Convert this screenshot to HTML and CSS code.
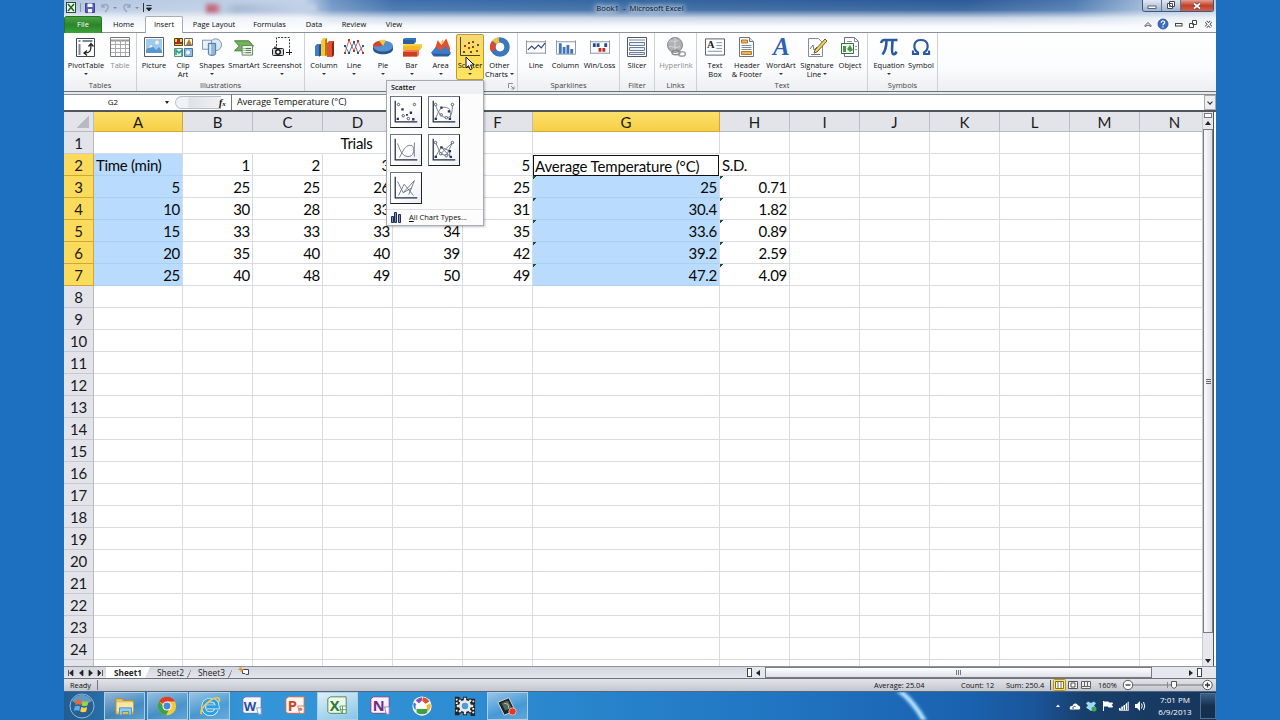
FILE: index.html
```
<!DOCTYPE html>
<html lang="en">
<head>
    <meta charset="UTF-8">
    <meta name="viewport" content="width=device-width, initial-scale=1.0">
    <title>Book1 - Microsoft Excel</title>
    <link rel="stylesheet" href="styles.css">
</head>
<body>
    <div class="window">
        <div class="chrome">
            <div class="glass-tabs"></div>
            <div class="titlebar">
                <svg class="quick" width="90" height="14" viewBox="0 0 90 14">
                    <rect x="1.5" y="2.5" width="9" height="10" fill="#f4faf2" stroke="#24522b"/>
                    <path d="M3 4l6 7M9 4l-6 7" stroke="#1e6a2c" stroke-width="1.6"/>
                    <path d="M15.5 3v9" stroke="#8496b4"/>
                    <path d="M20.5 3.5h9v9h-9z" fill="#5d62b8" stroke="#3b4197"/>
                    <path d="M22.5 3.5h5v3.5h-5zM23 9h4v3.5h-4z" fill="#f4f5ff"/>
                    <path d="M37 4v3h3M37 7c2-4 7-3 6 1c-.5 2-2 3-3 4" fill="none" stroke="#98a6bc" stroke-width="1.4"/>
                    <path d="M48 7h4l-2 2zM70 7h4l-2 2z" fill="#7d8ba5"/>
                    <path d="M65 4v3h-3M65 7c-2-4-7-3-6 1c.5 2 2 3 3 4" fill="none" stroke="#98a6bc" stroke-width="1.4"/>
                    <path d="M78.5 3v9" stroke="#333"/>
                    <path d="M81.5 5.5h5M81.5 8h5l-2.5 3z" stroke="#222" stroke-width=".9" fill="#222"/>
                </svg>
                <span class="title">Book1&nbsp; - &nbsp;Microsoft Excel</span>
                <div class="winbtns">
                    <span class="wb"><svg width="10" height="8" viewBox="0 0 10 8"><rect x="1" y="4" width="8" height="2.5" fill="#fff" stroke="#445" stroke-width=".8"/></svg></span>
                    <span class="wb"><svg width="10" height="9" viewBox="0 0 10 9"><path d="M3.5.5h5v5h-5zM1.5 2.5h5v5h-5z" fill="#fff" stroke="#445"/><rect x="3" y="4" width="2" height="2" fill="#667"/></svg></span>
                    <span class="wb close"><svg width="10" height="8" viewBox="0 0 10 8"><path d="M2 1.5l6 5M8 1.5l-6 5" stroke="#5b2a2a" stroke-width="3"/><path d="M2 1.5l6 5M8 1.5l-6 5" stroke="#fff" stroke-width="1.8"/></svg></span>
                </div>
            </div>
            <div class="tabs">
                <span class="tab file">File</span>
                <span class="tab home">Home</span>
                <span class="tab insert">Insert</span>
                <span class="tab layout">Page Layout</span>
                <span class="tab formulas">Formulas</span>
                <span class="tab">Data</span>
                <span class="tab">Review</span>
                <span class="tab">View</span>
                <svg class="help" width="70" height="14" viewBox="0 0 70 14">
                    <path d="M2 8.5l3-3l3 3v1l-3-1.5l-3 1.5z" fill="#fff" stroke="#444" stroke-width=".9"/>
                    <circle cx="20" cy="7" r="5" fill="#3b6cc4" stroke="#234b93" stroke-width=".8"/>
                    <path d="M18.3 5.7c0-2.4 3.6-2.2 3.4 0c-.1 1.2-1.7 1.1-1.7 2.5M20 9.2v1.2" stroke="#fff" stroke-width="1.2" fill="none"/>
                    <rect x="32.5" y="6.5" width="6.5" height="2.5" fill="#fff" stroke="#444"/>
                    <path d="M49.5 3.5h4v4h-4zM46.5 6.5h4v4h-4z" fill="#fff" stroke="#444"/>
                    <path d="M63 4.5l5 5.5M68 4.5l-5 5.5" stroke="#444" stroke-width="2.8"/><path d="M63 4.5l5 5.5M68 4.5l-5 5.5" stroke="#fff" stroke-width="1.2"/>
                </svg>
            </div>
        </div>

        <div class="ribbon">
            <div class="group tables">
                <div class="buttons">
                    <div class="btn w40">
                        <svg viewBox="0 0 20 20"><path d="M.5 1.500h18v18h-18z" fill="#fff" stroke="#3f4552"/><path d="M2.500 4h2M6.500 4h10M3.500 7v11" stroke="#7d8898" stroke-width="2"/><path d="M9 16c5 0 6-2 6-8M12.500 9.500l2.500-3l2.500 3M11 13.500l-3 2.500l3 2.500" fill="none" stroke="#222" stroke-width="1.3"/></svg>
                        PivotTable<i></i>
                    </div>
                    <div class="btn w28 off">
                        <svg viewBox="0 0 20 20"><path d="M.5.5h19v19H.5z" fill="#fff" stroke="#777"/><path d="M.5 3.500h19" stroke="#999" stroke-width="2"/><path d="M1 7.500h18M1 11.500h18M1 15.500h18M5.500 3v16M10.500 3v16M15.500 3v16" stroke="#aaa"/></svg>
                        Table
                    </div>
                </div>
                <div class="caption">Tables</div>
            </div>
            <div class="group illus">
                <div class="buttons">
                    <div class="btn w28">
                        <svg viewBox="0 0 20 20"><path d="M.5.5h19v19H.5z" fill="#fff" stroke="#555d6c"/><path d="M2 2h16v14H2z" fill="#9dcbf0"/><path d="M2 16v-3l5-6l5 6l3-3l3 4v2z" fill="#5a96cf"/><path d="M4 11l3-4l2 3z" fill="#e8f3fb"/><circle cx="13" cy="5.500" r="2" fill="#f7f2cf"/></svg>
                        Picture
                    </div>
                    <div class="btn w30">
                        <svg viewBox="0 0 20 20"><path d="M1.500 1.500h8v7h-8z" fill="#f2cf3c" stroke="#55411c"/><path d="M2 5h7v2H2zM4 2h3v4H4z" fill="#9b3030"/><path d="M11.500 1.500h8v7h-8z" fill="#fffbe0" stroke="#666"/><path d="M13 8l3-6l3 6z" fill="#b37b24"/><path d="M1.500 11.500h8v8h-8z" fill="#e0f0e8" stroke="#5a8f80"/><path d="M3 18v-5l3 3l3-3v6" stroke="#2c9880" fill="none" stroke-width="1.5"/><path d="M11.500 11.500h8v8h-8z" fill="#8bbbe3" stroke="#48739e"/><circle cx="15" cy="15.500" r="2" fill="#eef5fc"/></svg>
                        Clip<br>Art
                    </div>
                    <div class="btn w28">
                        <svg viewBox="0 0 22 20"><circle cx="15" cy="7.500" r="6.500" fill="#dbe7f4" stroke="#6f8fb1"/><path d="M.5 2.500h10v10H.500z" fill="#e8f0f9" stroke="#6f8fb1"/><path d="M7 6h8v11.500c0 2.300-8 2.300-8 0z" fill="#91b6db" stroke="#466f9d"/><path d="M9 7v11" stroke="#dbeafa" stroke-width="2"/></svg>
                        Shapes<i></i>
                    </div>
                    <div class="btn w36">
                        <svg viewBox="0 0 21 20"><path d="M.5 3.500h15l5 5.500l-5 5h-15l5-5z" fill="#72b35b" stroke="#427a31"/><path d="M8.500 8.500h11v10h-11z" fill="#f7fbf6" stroke="#5b8150"/><path d="M10 11.500h1M12 11.500h6M10 13.500h1M12 13.500h6M10 16h1M12 16h6" stroke="#3f6840"/></svg>
                        SmartArt
                    </div>
                    <div class="btn w40">
                        <svg viewBox="0 0 20 20"><path d="M4.500 9V.5h13V14" fill="none" stroke="#333" stroke-dasharray="2 1.300"/><path d="M14 15.500h6M17.500 13v5" stroke="#222"/><rect x=".5" y="11.500" width="11" height="7" rx="1" fill="#d0d3d8" stroke="#222"/><path d="M2 11V9.500h3V11" fill="#555"/><circle cx="6" cy="15" r="2.300" fill="#fff" stroke="#111" stroke-width="1.400"/></svg>
                        Screenshot<i></i>
                    </div>
                </div>
                <div class="caption">Illustrations</div>
            </div>
            <div class="group charts">
                <div class="buttons">
                    <div class="btn w28">
                        <svg viewBox="0 0 20 20"><path d="M1 9l2-2h4v12H1z" fill="#3f7cc3"/><path d="M5 8l2-1v11l-2 2z" fill="#234d86"/><path d="M7 4l2-3h4v18H7z" fill="#f5c63a"/><path d="M11 3l2-2v17l-2 1z" fill="#b07f12"/><path d="M13 6l2-2h5v14l-2 2h-5z" fill="#dd5331"/><path d="M18 6l2-2v14l-2 2z" fill="#8e2415"/></svg>
                        Column<i></i>
                    </div>
                    <div class="btn w32">
                        <svg viewBox="0 0 20 20"><path d="M1 16l4-13l5 11l4-10l5 12" fill="none" stroke="#c9655d"/><path d="M1 9l4 7l5-11l4 11l5-7" fill="none" stroke="#56759f"/><path d="M0 15h2v2H0zM4 2h2v2H4zM9 13h2v2H9zM13 3h2v2h-2zM18 15h2v2h-2z" fill="#c2302a"/><path d="M0 8h2v2H0zM4 15h2v2H4zM9 4h2v2H9zM13 15h2v2h-2zM18 8h2v2h-2z" fill="#26508e"/></svg>
                        Line<i></i>
                    </div>
                    <div class="btn w26">
                        <svg viewBox="0 0 20 20"><path d="M0 9v3c0 7 20 7 20 0V9z" fill="#27578f"/><ellipse cx="10" cy="9" rx="10" ry="5.500" fill="#5590d0"/><path d="M10 9L0 9.500C0 6 3 4.500 7 4z" fill="#d7422b"/><path d="M10 9L6 3.500C8 2.600 11 2.500 13 3z" fill="#f3c944"/></svg>
                        Pie<i></i>
                    </div>
                    <div class="btn w31">
                        <svg viewBox="0 0 20 20"><path d="M1 2l2-1h11v4l-2 2H1z" fill="#3674bf"/><path d="M1 3h11v4H1z" fill="#2c5d9f"/><path d="M1 8l2-1h17v4l-2 2H1z" fill="#f6d04b"/><path d="M1 9h17v4H1z" fill="#f0b925"/><path d="M1 14l2-1h14v5l-2 2H1z" fill="#ef7857"/><path d="M1 15h14v4H1z" fill="#cd3d22"/></svg>
                        Bar<i></i>
                    </div>
                    <div class="btn w27">
                        <svg viewBox="0 0 21 20"><path d="M4 12l3-9l4 5l5-7l4 10v7H4z" fill="#e0512f"/><path d="M10 7l2-5l2 3z" fill="#f3bb31"/><path d="M0 16l5-6l5 4l5-5l6 7l-3 3H2z" fill="#3b7cc5"/><path d="M1 17h20l-3 3H3z" fill="#2a5fa3"/></svg>
                        Area<i></i>
                    </div>
                    <div class="btn scatter">
                        <svg viewBox="0 0 20 20"><path d="M.5 0v18.500H20" fill="none" stroke="#4c4628"/><path d="M4 8h2v2H4zM8 10h2v2H8zM12 4h2v2h-2zM16 13h2v2h-2z" fill="#b4362d"/><path d="M3 14h2v2H3zM8 5h2v2H8zM12 9h2v2h-2zM17 7h2v2h-2zM10 14h2v2h-2z" fill="#7b4b20"/></svg>
                        Scatter<i></i>
                        <svg class="cursor" viewBox="0 0 10 15"><path d="M1 1v11l2.500-2.300l1.700 4l2-.9l-1.700-3.800H9z" fill="#fff" stroke="#111"/></svg>
                    </div>
                    <div class="btn other">
                        <svg viewBox="0 0 20 20"><circle cx="10" cy="10" r="7" fill="none" stroke="#3a77bd" stroke-width="5.5"/><path d="M3.500 13.500A7 7 0 0 1 4 6" fill="none" stroke="#dc4b2c" stroke-width="5.5"/><path d="M4.500 5.500A7 7 0 0 1 9 3" fill="none" stroke="#f2c03a" stroke-width="5.5"/><circle cx="10" cy="10" r="4.200" fill="#fdfdfe"/></svg>
                        Other<br>Charts <i class="inl"></i>
                    </div>
                </div>
                <div class="caption"><svg class="launch" width="7" height="7" viewBox="0 0 7 7"><path d="M.5 5V.5H5M3 3l3 3M6 3.500V6H3.500" stroke="#8a8f98" fill="none"/></svg></div>
            </div>
            <div class="group spark">
                <div class="buttons">
                    <div class="btn w24">
                        <svg viewBox="0 0 21 20"><path d="M.5 3v14M20.500 3v14M0 4.500h21M0 16.500h21" stroke="#8c939e"/><path d="M2 13l4-4l3 3l4-4l3 3l4-5" fill="none" stroke="#2e4a7c" stroke-width="1.2"/></svg>
                        Line
                    </div>
                    <div class="btn w35">
                        <svg viewBox="0 0 21 20"><path d="M.5 3v14M20.500 3v14M0 4.500h21M0 17.500h21" stroke="#8c939e"/><path d="M3 6h3v11H3zM7 10h3v7H7zM11 8h3v9h-3zM15 12h3v5h-3z" fill="#4173ba"/></svg>
                        Column
                    </div>
                    <div class="btn w33">
                        <svg viewBox="0 0 21 20"><path d="M.5 3v14M20.500 3v14M0 4.500h21M0 16.500h21" stroke="#8c939e"/><path d="M3 6h3v4H3zM7 6h3v4H7zM15 6h3v4h-3z" fill="#244d8e"/><path d="M9 11h3v4H9zM13 11h3v4h-3z" fill="#bd2f25"/></svg>
                        Win/Loss
                    </div>
                </div>
                <div class="caption">Sparklines</div>
            </div>
            <div class="group filter">
                <div class="buttons">
                    <div class="btn w28">
                        <svg viewBox="0 0 20 20"><path d="M.5.5h19v19H.5z" fill="#fff" stroke="#4f5867"/><path d="M2 3h16" stroke="#7c8797"/><path d="M2.500 5.500h15v3h-15zM2.500 10.500h15v3h-15zM2.500 15.500h15v2h-15z" fill="#e8eefa" stroke="#6c7d9b"/></svg>
                        Slicer
                    </div>
                </div>
                <div class="caption">Filter</div>
            </div>
            <div class="group links">
                <div class="buttons">
                    <div class="btn w40 off">
                        <svg viewBox="0 0 20 20"><circle cx="9" cy="8" r="7.500" fill="#aeb1b5" stroke="#85888d"/><path d="M3 5c3-3 6 2 9-2M3 10c4-2 6 3 11-1M9 1v14" fill="none" stroke="#d7d9dc"/><ellipse cx="10" cy="15.500" rx="4" ry="2.300" fill="none" stroke="#85888d" stroke-width="1.5"/><ellipse cx="16" cy="17" rx="3.500" ry="2.200" fill="none" stroke="#9b9ea3" stroke-width="1.5"/></svg>
                        Hyperlink
                    </div>
                </div>
                <div class="caption">Links</div>
            </div>
            <div class="group textgroup">
                <div class="buttons">
                    <div class="btn w28">
                        <svg viewBox="0 0 21 20"><path d="M.5 1.500h20v17H.5z" fill="#fff" stroke="#4f5867"/><text x="2" y="11.500" class="glyph">A</text><path d="M12 5.500h6M12 8.500h6M12 11.500h6M3 14.500h15" stroke="#8190a8"/></svg>
                        Text<br>Box
                    </div>
                    <div class="btn w36">
                        <svg viewBox="0 0 20 20"><path d="M2.500.5h10l4 4v15h-14z" fill="#fff" stroke="#6b7587"/><path d="M12.500.5v4h4" fill="#dde4ee" stroke="#6b7587"/><path d="M4.500 3h6v3h-6zM4.500 14.500h10v3h-10z" fill="#f2b05a" stroke="#b7762a"/><path d="M4.500 8.500h10M4.500 10.500h10M4.500 12.500h10" stroke="#7c8aa3"/></svg>
                        Header<br>&amp; Footer
                    </div>
                    <div class="btn w32">
                        <svg class="wordart" viewBox="0 0 20 20"><text x="2" y="18" class="glyph art">A</text></svg>
                        WordArt<i></i>
                    </div>
                    <div class="btn w40">
                        <svg viewBox="0 0 20 20"><path d="M1.500 1.500h10l4 4v14h-14z" fill="#fff" stroke="#858d99"/><path d="M3 12l3-4l1 5l3-3M4 17.500h9" fill="none" stroke="#6c7580"/><path d="M18 2l2 2L10 15l-3 1l1-3z" fill="#efcf57" stroke="#604e26" stroke-width=".9"/></svg>
                        Signature<br>Line <i class="inl"></i>
                    </div>
                    <div class="btn w26">
                        <svg viewBox="0 0 20 20"><path d="M4.500.5h10l4 4v15h-14z" fill="#fff" stroke="#697484"/><path d="M14.500.5v4h4M7 4.500h5M15 9.500h2M15 12.500h2" fill="none" stroke="#8794a5"/><path d="M1.500 6.500h12v10h-12z" fill="#f1f8ee" stroke="#3d6e43"/><path d="M3 15V9h3v6M7 12l3-4l3 5l-3 2z" fill="#4f9352"/></svg>
                        Object
                    </div>
                </div>
                <div class="caption">Text</div>
            </div>
            <div class="group symbols">
                <div class="buttons">
                    <div class="btn w36">
                        <svg viewBox="0 0 20 20"><path d="M2 6C3 2.500 4.500 3 6 3h12.500" fill="none" stroke="#2b5aa5" stroke-width="2.600"/><path d="M7.500 3c0 6-1 11-4 14.500M13.500 3c0 6-1.500 13 .5 14c1.500.5 2.800-.5 3.500-2.500" fill="none" stroke="#2b5aa5" stroke-width="2.600"/></svg>
                        Equation<i></i>
                    </div>
                    <div class="btn w28">
                        <svg viewBox="0 0 20 20"><path d="M2 13.500V17h5v-1.500C1.500 12 2 3 10 3s8.500 9 3 12.500V17h5v-3.500" fill="none" stroke="#2b5aa5" stroke-width="2.200"/></svg>
                        Symbol
                    </div>
                </div>
                <div class="caption">Symbols</div>
            </div>
        </div>

        <div class="formula-bar">
            <span class="name-box">G2</span>
            <i class="arrow"></i>
            <span class="fx-pill"></span>
            <span class="fx">f<small>x</small></span>
            <span class="formula">Average Temperature (°C)</span>
            <span class="expand"><i class="chev"></i></span>
        </div>

        <div class="sheet-area">
            <div class="grid" id="grid"></div>
            <div class="vscroll">
                <div class="split"></div>
                <div class="up"></div>
                <div class="thumb"><b></b><b></b><b></b></div>
                <div class="down"></div>
            </div>
        </div>

        <div class="sheet-tabs">
            <svg width="42" height="12" viewBox="0 0 42 12"><path d="M4.500 3v6M9 3v6L5.500 6zM19 3v6l-3.500-3zM25 3v6l3.500-3zM34 3v6l3-3zM38.500 3v6" fill="#222" stroke="#222" stroke-width=".7"/></svg>
            <span class="stab on">Sheet1</span>
            <span class="stab">Sheet2</span>
            <span class="stab">Sheet3</span>
            <span class="stab new"><svg width="12" height="9" viewBox="0 0 12 9"><path d="M4.500 2.500h6v5H8l-1-1H4.500z" fill="#fff" stroke="#445"/><path d="M3 0v5M.5 2.500h5M1.200.8l3.600 3.400" stroke="#e08a2a"/></svg></span>
            <div class="hscroll">
                <span class="hsplit"></span>
                <span class="left"></span>
                <span class="hthumb"><b></b><b></b><b></b></span>
                <span class="right"></span>
                <span class="hsplit"></span>
            </div>
        </div>

        <div class="status">
            <span class="ready">Ready</span>
            <span class="average">Average: 25.04</span>
            <span class="count">Count: 12</span>
            <span class="sum">Sum: 250.4</span>
            <svg class="views" width="42" height="12" viewBox="0 0 42 12">
                <path d="M.5 1v10" stroke="#555"/>
                <rect x="3.500" y=".5" width="12" height="11" rx="1" fill="#fbe26d" stroke="#b69524"/>
                <path d="M5.500 2.500h8v7h-8zM8 2.500v7M11 2.500v7" fill="#fff" stroke="#806d2f"/>
                <path d="M18.500 2.500h9v7h-9z" fill="#eee" stroke="#555"/><path d="M21 4h4v4h-4z" fill="#fff" stroke="#555"/>
                <path d="M31.500 2.500h9v7h-9zM34.500 2.500v5M37.500 2.500v5M32 7.500h8" fill="#eee" stroke="#666"/>
            </svg>
            <span class="zoom">160%</span>
            <svg width="92" height="12" viewBox="0 0 92 12">
                <path d="M11 6h70" stroke="#777"/><path d="M45.500 3v6" stroke="#888"/>
                <circle cx="6" cy="6" r="4.700" fill="#fff" stroke="#555"/><path d="M3.500 6h5" stroke="#333" stroke-width="1.3"/>
                <path d="M49.500 2.500h5v5L52 9.500l-2.500-2z" fill="#fff" stroke="#555"/>
                <circle cx="85.500" cy="6" r="4.700" fill="#fff" stroke="#555"/><path d="M83 6h5M85.500 3.500v5" stroke="#333" stroke-width="1.3"/>
            </svg>
        </div>

        <div class="menu">
            <div class="menu-title">Scatter</div>
            <div class="choices">
                <svg viewBox="0 0 32 32"><path d="M4.500 4v22.500H28" class="axis"/><g class="ring"><circle cx="8" cy="8" r="1.300"/><circle cx="25" cy="8" r="1.300"/><circle cx="13" cy="20" r="1.300"/><circle cx="18.500" cy="23" r="1.300"/></g><path d="M11 12h2.500v2.500H11zM20 15.500h2.500V18H20zM16 18h2v2h-2zM6 22h2.500v2.500H6zM22.500 22.500H25V25h-2.500z"/></svg>
                <svg viewBox="0 0 32 32"><path d="M4.500 4v22.500H28" class="axis"/><path d="M7 8c2 8 6 14 12 14c5 0 6-6 6-14M7 23c3-7 5-13 10-12s6 1 6 12" class="ln"/><g class="ring"><circle cx="7" cy="8" r="1.300"/><circle cx="25" cy="8" r="1.300"/><circle cx="13" cy="19" r="1.300"/><circle cx="18.500" cy="22" r="1.300"/></g><path d="M12 10h2.500v2.500H12zM20 14h2.500v2.500H20zM6 22h2.500v2.500H6zM21 22h2.500v2.500H21z"/></svg>
                <svg viewBox="0 0 32 32"><path d="M4.500 4v22.500H28" class="axis"/><path d="M7 9c2 6 5 14 11 14c6 0 7-5 7-15M9 24c4-7 6-13 11-13c4 0 5 3 5 12" class="ln"/></svg>
                <svg viewBox="0 0 32 32"><path d="M4.500 4v22.500H28" class="axis"/><path d="M7 8l5.500 12l6 2l6.500-14M7 23l6-10l9 4v6" class="ln"/><path d="M13 13l9.500 10M12.500 20L25 8" class="ln"/><g class="ring"><circle cx="7" cy="8" r="1.300"/><circle cx="25" cy="8" r="1.300"/><circle cx="12.500" cy="20" r="1.300"/><circle cx="18.500" cy="22" r="1.300"/></g><path d="M12 12h2.500v2.500H12zM21 16h2.500v2.500H21zM6 22h2.500v2.500H6zM22 22h2.500v2.500H22z"/></svg>
                <svg viewBox="0 0 32 32"><path d="M4.500 4v22.500H28" class="axis"/><path d="M7 9l6 12l12-13l-6 15M8 24l6-12l10 12M13 21l9-5" class="ln"/></svg>
            </div>
            <div class="all-types">
                <svg width="12" height="12" viewBox="0 0 12 12"><path d="M1.500 5.500h2v6h-2zM4.500 1.500h2v10h-2zM8.500 3.500h2v8h-2z" fill="#8296c4" stroke="#1e2b55"/></svg>
                <span><u>A</u>ll Chart Types...</span>
            </div>
        </div>
    </div>

    <div class="taskbar">
        <svg class="streak" width="60" height="28" viewBox="0 0 60 28"><path d="M17 -3Q34 9 46 32" fill="none" stroke="#5aa9e8" stroke-width="8" opacity=".5"/><path d="M17 -3Q34 9 46 32" fill="none" stroke="#b4defa" stroke-width="4"/></svg>
        <div class="start"><svg width="28" height="28" viewBox="0 0 28 28"><circle cx="14" cy="14" r="12" fill="#2a5f92" stroke="#8fb9d9"/><path d="M4 9C8 1 20 1 24 9c-5 4-15 4-20 0z" fill="#7fb0d6" opacity=".7"/><path d="M8 9c2-1.500 4-1.500 5.500-.5L12.500 13c-1.500-1-3.500-1-5.500 0z" fill="#f0672c"/><path d="M14.500 9c2 1 4 1 6 0l-1 4.500c-2 1-4 1-6 0z" fill="#9fd04b"/><path d="M6.800 14.500c2-1 3.800-1 5.400 0l-1 4.500c-1.600-1-3.600-1-5.400 0z" fill="#55b1ea"/><path d="M13.200 15c2 1 4 1 6 0l-1 4.500c-2 1-4 1-6 0z" fill="#fad14a"/></svg></div>
        <div class="task open"><svg viewBox="0 0 24 24"><path d="M2 4h7l1 2h11v15H2z" fill="#e5c264" stroke="#b08b34"/><path d="M3 8h18v10H3z" fill="#f8e6a6"/><path d="M6 14h13v8h-3v-4H9v4H6z" fill="#8ccbee" stroke="#4b8fbd"/></svg></div>
        <div class="task open"><svg viewBox="0 0 24 24"><circle cx="12" cy="12" r="10" fill="#f3cb3a"/><path d="M12 12L3.300 7A10 10 0 0 1 20.700 7H12z" fill="#dc3d2c"/><path d="M3.300 7A10 10 0 0 0 11 22l4-8l-5-.5z" fill="#3ba14b"/><circle cx="12" cy="12" r="5" fill="#fff"/><circle cx="12" cy="12" r="3.800" fill="#4a86d8"/></svg></div>
        <div class="task open"><svg viewBox="0 0 24 24"><path d="M19 16c-1.500 3-3.500 4.500-6.500 4.500c-4.500 0-7.500-3-7.500-7.500s3-7.500 7.500-7.500S20 8.500 20 13H8" fill="none" stroke="#e6f6ff" stroke-width="5"/><path d="M19 16c-1.500 3-3.500 4.500-6.500 4.500c-4.500 0-7.500-3-7.500-7.500s3-7.500 7.500-7.500S20 8.500 20 13H8" fill="none" stroke="#2b9fe3" stroke-width="3.400"/><path d="M3 21C-1 17 12 3 20 3c3 0 3 2 1 5" fill="none" stroke="#f4ca43" stroke-width="1.800"/></svg></div>
        <div class="task"><svg viewBox="0 0 24 24"><path d="M2 4l3-2h17v18H4l-2-2z" fill="#f5f8fd" stroke="#5472b8"/><text x="3" y="17" class="letter word">W</text><path d="M17 14h5v7h-3z" fill="#fff" stroke="#7f98cc"/></svg></div>
        <div class="task"><svg viewBox="0 0 24 24"><path d="M2 4l3-2h17v18H4l-2-2z" fill="#fdf4f0" stroke="#c56546"/><text x="4" y="17" class="letter ppt">P</text><path d="M15 12h7v8h-5z" fill="#fff" stroke="#d17658"/><circle cx="18" cy="15.500" r="2" fill="#db7c59"/></svg></div>
        <div class="task open light"><svg viewBox="0 0 24 24"><path d="M2 4l3-2h17v18H4l-2-2z" fill="#eff8ea" stroke="#47804b"/><text x="4" y="17" class="letter xls">X</text><path d="M15 12h7v8h-5zM15 16h7M18 12v8" fill="#fff" stroke="#5c9b60"/></svg></div>
        <div class="task"><svg viewBox="0 0 24 24"><path d="M2 4l3-2h17v18H4l-2-2z" fill="#f8f0fa" stroke="#78408b"/><text x="4" y="17" class="letter one">N</text><path d="M17 13h5v8h-3z" fill="#fff" stroke="#a273b1"/></svg></div>
        <div class="task"><svg viewBox="0 0 24 24"><circle cx="12" cy="12" r="10.500" fill="#fff"/><path d="M12 12L5 6A9.500 9.500 0 0 1 12 2.500z" fill="#8d52a8"/><path d="M13 2.500A9.500 9.500 0 0 1 20 7l-5 3l-3-3z" fill="#e5502e"/><path d="M21 9a9.500 9.500 0 0 1-2 9l-3-6z" fill="#f0b52e"/><path d="M18 19a9.500 9.500 0 0 1-12 0v-4h12z" fill="#459c47"/><path d="M3 8a9.500 9.500 0 0 0 2 9v-6l1-1z" fill="#3f7ac6"/><path d="M7 11l5-5l5 5v4H7z" fill="#fff"/></svg></div>
        <div class="task"><svg viewBox="0 0 24 24"><path d="M1 2h5v20H1zM18 4h5v19h-5z" fill="#222"/><path d="M2 4h2v2H2zM2 8h2v2H2zM2 12h2v2H2zM2 16h2v2H2zM20 6h2v2h-2zM20 10h2v2h-2zM20 14h2v2h-2zM20 18h2v2h-2z" fill="#fff"/><path d="M12 2v4M12 18v4M2 12h4M18 12h4M5 5l3 3M16 16l3 3M5 19l3-3M16 8l3-3" stroke="#222" stroke-width="4.500"/><circle cx="12" cy="12" r="5.500" fill="none" stroke="#222" stroke-width="5.500"/><path d="M12 3v4M12 17v4M3 12h4M17 12h4M5.600 5.600l3 3M15.500 15.500l3 3M5.600 18.500l3-3M15.500 8.500l3-3" stroke="#e6e9eb" stroke-width="2.500"/><circle cx="12" cy="12" r="5" fill="#4c9cd6" stroke="#e6e9eb" stroke-width="3"/></svg></div>
        <div class="task open"><svg viewBox="0 0 24 24"><path d="M2 8l12-5l7 14l-12 5z" fill="#1e2421" stroke="#dde"/><path d="M6 9l7-3l4 8l-7 3z" fill="#51665a"/><path d="M9 9l4 1l1 5" stroke="#b9c6b1" fill="none"/><circle cx="18" cy="18" r="4" fill="#dc3a2b" stroke="#f5b4a5"/></svg></div>
        <div class="tray">
            <svg width="94" height="16" viewBox="0 0 94 16" fill="#fff">
                <path d="M1 9l2-2.500L5 9z"/>
                <path d="M15 11.500c-1-3 1-4 2.500-3.500c.5-3 4-3.500 5.500-.5c2.500 0 3 3.500 1 4z"/><path d="M18 11c-.5-2 1-3 2.500-2.500" stroke="#1d4673" fill="none"/>
                <path d="M33 3.500l3 1.500l3-1.500l2 2l-2 2l2 2l-5 3.500l-5-3.500l2-2l-2-2z" fill="#9fdaf5"/><circle cx="39" cy="11" r="2.500" fill="#43a652"/>
                <path d="M48.500 3v10M49 4h4.500v1h4l-1 2l1 2h-4V8H49z" stroke="#fff"/>
                <path d="M64 10h1.500v2H64zM66.300 8.500h1.500V12h-1.500zM68.600 7h1.500v5h-1.500zM70.900 5.500h1.500V12h-1.500z"/><path d="M64.500 12.500h9V4z" fill="none" stroke="#fff" stroke-width=".7"/>
                <path d="M80 6h2l3-3v10l-3-3h-2z"/><path d="M86.500 5.500q1.500 2.500 0 5M88.500 4q2.500 4 0 8" fill="none" stroke="#fff"/>
            </svg>
            <div class="clock">7:01 PM<br>6/9/2013</div>
            <div class="peek"></div>
        </div>
    </div>

    <script>
        const cols = ['A', 'B', 'C', 'D', 'E', 'F', 'G', 'H', 'I', 'J', 'K', 'L', 'M', 'N'];
        const data = {
            2: ['Time (min)', '1', '2', '3', '', '5', 'Average Temperature (°C)', 'S.D.'],
            3: ['5', '25', '25', '26', '', '25', '25', '0.71'],
            4: ['10', '30', '28', '33', '', '31', '30.4', '1.82'],
            5: ['15', '33', '33', '33', '34', '35', '33.6', '0.89'],
            6: ['20', '35', '40', '40', '39', '42', '39.2', '2.59'],
            7: ['25', '40', '48', '49', '50', '49', '47.2', '4.09']
        };
        const grid = document.getElementById('grid');

        function addCell(text, cls) {
            const el = document.createElement('div');
            el.className = cls;
            el.textContent = text;
            grid.appendChild(el);
        }

        addCell('', 'head corner');
        cols.forEach((c) => addCell(c, 'head' + (c === 'A' || c === 'G' ? ' gold' : '')));

        for (let r = 1; r <= 25; r++) {
            addCell(r, 'head row' + (r >= 2 && r <= 7 ? ' gold' : ''));
            cols.forEach((c, i) => {
                // B1:F1 is one merged cell
                if (r === 1 && i > 1 && i < 6) return;
                if (r === 1 && i === 1) return addCell('Trials', 'cell merged');
                const inData = r >= 2 && r <= 7;
                let cls = 'cell';
                if (inData && c === 'A') cls += ' sel';
                if (inData && c === 'G') cls += r === 2 ? ' active' : ' sel';
                if (r === 2 && (c === 'A' || c === 'G' || c === 'H')) cls += ' txt';
                if (r > 2 && inData && (c === 'G' || c === 'H')) cls += ' flag';
                addCell(data[r] && data[r][i] ? data[r][i] : '', cls);
            });
        }
    </script>
</body>
</html>
```
FILE: styles.css
```
* {
    box-sizing: border-box;
}
body {
    margin: 0;
    width: 1280px;
    height: 720px;
    overflow: hidden;
    background-color: #1c70bf;
    font-family: "Open Sans", "Noto Sans", sans-serif;
    font-size: 7.5px;
    color: #0c0c0c;
    padding: 0 64px;
}
.window {
    position: relative;
    width: 1152px;
    height: 692px;
    background-color: #fff;
}

/* title bar and ribbon tabs */
.chrome {
    position: relative;
    height: 33px;
    background: linear-gradient(to bottom, rgba(255,255,255,0) 0, rgba(255,255,255,0.1) 10px, rgba(255,255,255,0.75) 18px, #f8fafd 26px, #fff 33px),
        linear-gradient(to right, #b4c7e0 0, #c3d2e8 240px, #7096c4 268px, #3f6fab 330px, #34649f 600px, #2c5a97 900px, #4d79b0 1010px, #9db8d8 1080px, #b9cde4 1152px);
    border-bottom: 1px solid #8d9199;
}
.glass-tabs {
    position: absolute;
    left: 142px;
    top: 4px;
    width: 110px;
    height: 9px;
    background: linear-gradient(to right, #c3687e 0, #c3687e 9px, #c0cee3 16px, #a9bad4 30px, #c0cfe5 90px);
    filter: blur(2px);
}
.titlebar {
    position: relative;
    height: 16px;
    display: flex;
    align-items: flex-start;
}
.quick {
    margin-left: 1px;
    width: 90px;
}
.title {
    flex: 1;
    text-align: center;
    padding-right: 17px;
    font-size: 7.7px;
    line-height: 16px;
    color: #050d1c;
    text-shadow: 0 0 4px #dbe7f7, 0 0 5px #dbe7f7, 0 0 6px #dbe7f7, 0 0 8px #dbe7f7;
}
.winbtns {
    display: flex;
    margin-right: 2px;
    height: 12px;
    border: 1px solid #40587c;
    border-top: 0;
    border-radius: 0 0 3px 3px;
    overflow: hidden;
}
.wb {
    width: 19px;
    display: flex;
    align-items: center;
    justify-content: center;
    background: linear-gradient(#dfe8f3, #9fb4d0);
    border-right: 1px solid #5d7496;
}
.wb.close {
    width: 32px;
    border: 0;
    background: linear-gradient(#e3a08f, #c2402c 50%, #d0604a);
}
.tabs {
    position: relative;
    display: flex;
    height: 17px;
}
.tab {
    width: 40px;
    text-align: center;
    line-height: 17px;
    font-size: 7.5px;
}
.tab.file {
    width: 38px;
    color: #fff;
    background: linear-gradient(#4aa444, #2b8429 50%, #3ca33a);
    border: 1px solid #27722a;
    border-bottom: 0;
    border-radius: 3px 3px 0 0;
    line-height: 15px;
}
.tab.home { width: 43px; }
.tab.insert {
    width: 38px;
    height: 17px;
    background-color: #fff;
    border: 1px solid #a7adb7;
    border-bottom: 0;
    border-radius: 2px 2px 0 0;
    line-height: 15px;
}
.tab.layout { width: 62px; }
.tab.formulas { width: 49px; }
.help {
    margin-left: auto;
    margin-right: 3px;
    margin-top: 1px;
}

/* ribbon */
.ribbon {
    display: flex;
    height: 59px;
    background: linear-gradient(#fff, #fbfcfd 60%, #eceef1);
    border-bottom: 1px solid #6c7078;
}
.group {
    display: flex;
    flex-direction: column;
    border-right: 1px solid #cdd1d7;
}
.buttons {
    display: flex;
    height: 48px;
}
.caption {
    text-align: center;
    line-height: 9px;
    height: 10px;
    color: #444;
    position: relative;
}
.tables { width: 73px; }
.tables .buttons { padding-left: 2px; }
.illus { width: 168px; }
.illus .buttons { padding-left: 3px; }
.charts { width: 213px; }
.charts .buttons { padding-left: 5px; }
.spark { width: 102px; }
.spark .buttons { padding-left: 6px; }
.filter { width: 35px; }
.filter .buttons { padding-left: 3px; }
.links { width: 42px; }
.links .buttons { padding-left: 1px; }
.textgroup { width: 171px; }
.textgroup .buttons { padding-left: 4px; }
.symbols { width: 70px; }
.symbols .buttons { padding-left: 3px; }
.btn {
    position: relative;
    flex: none;
    padding-top: 4px;
    text-align: center;
    line-height: 9px;
    white-space: nowrap;
}
.btn > svg {
    display: block;
    width: 20px;
    height: 20px;
    margin: 0 auto 4px;
}
.btn > .wordart { overflow: visible; }
.btn i {
    display: block;
    width: 0;
    margin: 3px auto 0;
    border: 2px solid transparent;
    border-top-color: #333;
    border-bottom: 0;
}
.btn i.inl {
    display: inline-block;
    margin: 0 0 2px;
}
.btn.off { color: #8d8d8d; }
.w24 { width: 24px; }
.w26 { width: 26px; }
.w27 { width: 27px; }
.w28 { width: 28px; }
.w30 { width: 30px; }
.w31 { width: 31px; }
.w32 { width: 32px; }
.w33 { width: 33px; }
.w35 { width: 35px; }
.w36 { width: 36px; }
.w40 { width: 40px; }
.scatter {
    width: 28px;
    height: 46px;
    margin: 1px 0 0 2px;
    padding-top: 2px;
    background: linear-gradient(#f6d976, #fbdd55 50%, #fde565);
    border: 1px solid #c19a38;
    border-radius: 2px;
}
.other { width: 31px; }
.btn > .cursor {
    position: absolute;
    left: 8px;
    top: 21px;
    width: 10px;
    height: 15px;
    margin: 0;
}
.launch {
    position: absolute;
    right: 2px;
    top: 2px;
}
.glyph {
    font: bold 11px "Liberation Serif", serif;
    fill: #222;
}
.glyph.art {
    font: italic bold 25px "Liberation Serif", serif;
    fill: #2c62b4;
}

/* formula bar */
.formula-bar {
    display: flex;
    align-items: center;
    height: 20px;
    border-top: 2px solid #e8eaee;
    border-bottom: 2px solid #53565c;
    box-shadow: inset 0 1px 0 #888c94;
    font-size: 9.1px;
}
.name-box {
    width: 98px;
    text-align: center;
    font-size: 8px;
    line-height: 14px;
}
.arrow {
    border: 2.5px solid transparent;
    border-top: 3px solid #222;
    border-bottom: 0;
    margin-left: 3px;
}
.fx-pill {
    width: 46px;
    height: 13px;
    margin-left: 6px;
    border: 1px solid #b9bdc5;
    border-right: 0;
    border-radius: 7px 0 0 7px;
    background: linear-gradient(to right, #f1f2f5 25%, #dfe2e7 30%, #f0f1f4);
}
.fx {
    font: italic bold 10px "Liberation Serif", serif;
    margin-left: -2px;
    width: 12px;
}
.fx small { font-size: 7px; }
.formula {
    flex: 1;
    height: 16px;
    line-height: 16px;
    border-left: 1px solid #777;
    padding-left: 5px;
}
.expand {
    width: 12px;
    height: 15px;
    border: 1px solid #a5a9b1;
    background-color: #eceef2;
    display: flex;
    align-items: center;
    justify-content: center;
}
.chev {
    width: 4px;
    height: 4px;
    border: solid #222;
    border-width: 0 1.5px 1.5px 0;
    transform: rotate(45deg);
}

/* worksheet */
.sheet-area {
    display: flex;
    height: 554px;
    overflow: hidden;
}
.grid {
    display: grid;
    grid-template-columns: 30px 89px repeat(5, 70px) 187px repeat(7, 70px);
    grid-template-rows: 20px repeat(25, 22px);
    width: 1138px;
    flex: none;
    overflow: hidden;
    height: 554px;
    font-family: Lato, "Open Sans", sans-serif;
    font-size: 15px;
    color: #080808;
}
.head {
    background-color: #e2e4ea;
    border-right: 1px solid #b9bdc6;
    border-bottom: 1px solid #b5b9c2;
    text-align: center;
    line-height: 20px;
    color: #1a1a1a;
}
.head.row {
    line-height: 22px;
    letter-spacing: -0.3px;
    border-right: 1px solid #b5b9c2;
    border-bottom: 1px solid #c5c9d1;
}
.head.gold {
    background: linear-gradient(#fbe06c, #f7cf45);
    border-color: #d2a73a;
}
.head.row.gold { background: #fbdb5c; }
.corner {
    background: linear-gradient(135deg, #e2e4ea 50%, #b6bac3 50%) no-repeat 12px 3px / 13px 13px #e2e4ea;
}
.cell {
    border-right: 1px solid #d8dbe1;
    border-bottom: 1px solid #d8dbe1;
    text-align: right;
    padding-right: 2px;
    line-height: 23px;
    letter-spacing: -0.3px;
    white-space: nowrap;
    position: relative;
}
.merged {
    grid-column: span 5;
    text-align: center;
}
.txt {
    text-align: left;
    padding-left: 2px;
}
.sel {
    background-color: #b9dbfd;
    border-bottom-color: #add0f0;
}
.active {
    border: 1px solid #111;
    margin: 1px 1px 0 0;
    padding-left: 1px;
    line-height: 20px;
    letter-spacing: -0.15px;
}
.flag {
    background-image: linear-gradient(135deg, #1d5134 50%, transparent 50%);
    background-size: 4px 4px;
    background-repeat: no-repeat;
}
.vscroll {
    display: flex;
    flex-direction: column;
    width: 12px;
    background-color: #e6e8ed;
    border-left: 1px solid #c6c9d0;
    border-right: 1px solid #555;
}
.split {
    height: 5px;
    margin: 1px 1px 3px;
    border: 1px solid #777;
    background: #fff;
}
.up {
    margin: 0 auto;
    border: 3.5px solid transparent;
    border-bottom: 4px solid #222;
    border-top: 0;
}
.thumb {
    margin: 4px 0 0;
    height: 504px;
    border: 1px solid #777b84;
    background: linear-gradient(to right, #fbfbfd, #dcdfe6);
    display: flex;
    flex-direction: column;
    align-items: center;
    justify-content: center;
    gap: 1px;
}
.thumb b {
    width: 5px;
    height: 1px;
    background: #666;
}
.down {
    margin: 26px auto 0;
    border: 3.5px solid transparent;
    border-top: 4px solid #222;
    border-bottom: 0;
}

/* sheet tabs and status bar */
.sheet-tabs {
    display: flex;
    align-items: center;
    height: 12px;
    background: linear-gradient(#d3d6de, #e4e6ec);
    border-top: 1px solid #8f939b;
    font-size: 8.4px;
}
.stab {
    width: 41px;
    text-align: center;
    line-height: 11px;
    color: #222;
    background: linear-gradient(115deg, transparent 38px, #999 38px, #999 39px, transparent 39px);
}
.stab.on {
    width: 44px;
    background: #fff;
    font-weight: bold;
    font-size: 8.2px;
    clip-path: polygon(0 0, 100% 0, 39px 100%, 0 100%);
}
.stab.new { width: 24px; height: 11px; }
.hscroll {
    display: flex;
    align-items: center;
    margin-left: auto;
    width: 469px;
    height: 11px;
    background-color: #e6e8ed;
}
.hsplit {
    width: 5px;
    height: 9px;
    border: 1px solid #444;
    background: #fff;
}
.left {
    margin: 0 5px 0 4px;
    border: 3.5px solid transparent;
    border-right: 4px solid #222;
    border-left: 0;
}
.hthumb {
    width: 387px;
    height: 11px;
    border: 1px solid #777b84;
    background: linear-gradient(#fff, #dfe1e7);
    display: flex;
    align-items: center;
    justify-content: center;
    gap: 1px;
}
.hthumb b {
    width: 1px;
    height: 5px;
    background: #777;
}
.right {
    margin: 0 4px 0 37px;
    border: 3.5px solid transparent;
    border-left: 4px solid #222;
    border-right: 0;
}
.status {
    display: flex;
    align-items: center;
    height: 14px;
    padding-right: 2px;
    background: linear-gradient(#e3e4e9, #c3c6ce);
    border-top: 1px solid #6f737b;
    border-bottom: 1px solid #50657e;
    font-size: 7.4px;
    color: #111;
}
.ready {
    width: 34px;
    padding-left: 6px;
    border-right: 1px solid #777;
}
.average { margin-left: auto; width: 87px; }
.count { width: 45px; }
.sum { width: 44px; }
.views { margin-right: 5px; }
.zoom { width: 25px; padding-left: 1px; }

/* scatter gallery */
.menu {
    position: absolute;
    left: 322px;
    top: 80px;
    width: 98px;
    height: 146px;
    background-color: #fcfcfd;
    border: 1px solid #a5aab3;
    box-shadow: 1px 1px 2px rgba(0,0,0,0.25);
}
.menu-title {
    height: 13px;
    line-height: 13px;
    padding-left: 4px;
    background-color: #eef0f4;
    font-weight: 600;
    font-size: 7.2px;
}
.choices {
    display: grid;
    grid-template-columns: 32px 32px;
    align-content: start;
    gap: 6px;
    padding: 2px 3px;
    height: 115px;
}
.choices svg {
    width: 32px;
    height: 32px;
    border: 1px solid #69758a;
    border-right-color: #222;
    border-bottom-color: #222;
    background: linear-gradient(135deg, #fff 50%, #e9edf6);
    fill: #26354e;
}
.choices .axis {
    fill: none;
    stroke: #20293a;
    stroke-width: 1.3;
}
.choices .ln {
    fill: none;
    stroke: #6e788a;
}
.choices .ring {
    fill: #fff;
    stroke: #46556c;
}
.all-types {
    display: flex;
    align-items: center;
    gap: 7px;
    height: 15px;
    padding-left: 3px;
    border-top: 1px solid #dcdfe4;
}

/* taskbar */
.taskbar {
    position: relative;
    display: flex;
    align-items: stretch;
    width: 1152px;
    height: 28px;
    overflow: hidden;
    background: linear-gradient(to right, #215d91 0, #2b78b5 60px, #3496d8 190px, #2c8ad0 450px, #2176c2 700px, #1a62b0 900px, #1b559a 970px, #183f6c 1020px, #17365b 1152px);
}
.streak {
    position: absolute;
    left: 816px;
    top: 0;
    filter: blur(0.8px);
}
.start {
    width: 40px;
    padding: 0 4px;
}
.task {
    width: 41px;
    margin-right: 1.5px;
    display: flex;
    align-items: center;
    justify-content: center;
    padding-bottom: 1px;
}
.task.open {
    border: 1px solid #a9d0ea;
    background: linear-gradient(160deg, rgba(255,255,255,0.5), rgba(255,255,255,0.12) 60%, rgba(255,255,255,0.25));
}
.task.light {
    background: linear-gradient(160deg, rgba(255,255,255,0.85), rgba(200,240,245,0.55));
}
.task svg {
    width: 22px;
    height: 22px;
}
.letter {
    font: bold 16px "Open Sans", sans-serif;
}
.word { fill: #294f9f; font-size: 14px; }
.ppt { fill: #c7472a; }
.xls { fill: #2a7a36; }
.one { fill: #6f2b84; }
.tray {
    display: flex;
    align-items: center;
    margin-left: auto;
}
.clock {
    width: 50px;
    padding-left: 2px;
    text-align: center;
    color: #fff;
    line-height: 12px;
    font-size: 8px;
}
.peek {
    width: 16px;
    height: 26px;
    margin-left: 1px;
    border: 1px solid #4d6f93;
    background: linear-gradient(#3c6086, #142f50 50%);
}
```
